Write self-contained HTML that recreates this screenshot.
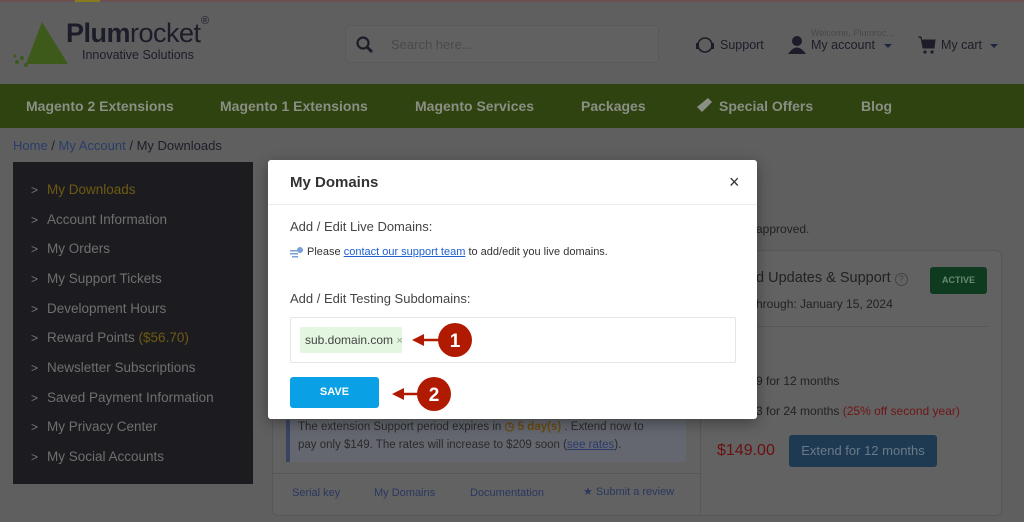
<!DOCTYPE html>
<html><head><style>
*{box-sizing:border-box;margin:0;padding:0}
body{width:1024px;height:522px;overflow:hidden;background:#5f5f5f;font-family:"Liberation Sans",sans-serif;position:relative;color:#222}
.abs{position:absolute}
.nav span{position:absolute;top:98px;color:#8a8f84;font-size:14px;font-weight:bold}
.side div{position:absolute;left:18px;font-size:13.5px;color:#6f6f6f;white-space:nowrap}
.side div b{font-weight:normal;color:#777;display:inline-block;width:16px;font-size:12px}
</style></head><body>
<div class="abs" style="left:0;top:0;width:1024px;height:2px;background:#6a5050"></div>
<div class="abs" style="left:75px;top:0;width:25px;height:2px;background:#8a7a20"></div>
<!-- logo -->
<svg class="abs" style="left:12px;top:20px" width="60" height="48">
<g fill="#3d5a1a"><polygon points="30,2 56,44 14,44"/></g>
<g fill="#3d5a1a"><circle cx="5" cy="42" r="2"/><circle cx="10" cy="38" r="2"/><circle cx="3" cy="36" r="1.5"/><circle cx="14" cy="45" r="2"/></g>
</svg>
<div class="abs" style="left:66px;top:18px;font-size:27px;font-weight:bold;color:#1d1d2a;letter-spacing:-0.5px">Plum<span style="font-weight:normal">rocket</span></div>
<div class="abs" style="left:201px;top:15px;font-size:11px;color:#1d1d2a">®</div>
<div class="abs" style="left:82px;top:48px;font-size:12.5px;color:#1d1d2a">Innovative Solutions</div>
<!-- search -->
<div class="abs" style="left:345px;top:25px;width:314px;height:38px;border:1px solid #595959;border-radius:4px;background:#616161"></div>
<svg class="abs" style="left:355px;top:35px" width="20" height="20"><circle cx="8" cy="8" r="5.5" fill="none" stroke="#1d1d2a" stroke-width="2.2"/><line x1="12" y1="12" x2="17" y2="17" stroke="#1d1d2a" stroke-width="3"/></svg>
<div class="abs" style="left:391px;top:37px;font-size:13px;color:#4a4a4a">Search here...</div>
<svg class="abs" style="left:694px;top:35px" width="22" height="22"><circle cx="11" cy="10" r="7" fill="none" stroke="#1d1d2a" stroke-width="1.6"/><rect x="2" y="8" width="3" height="6" fill="#1d1d2a"/><rect x="17" y="8" width="3" height="6" fill="#1d1d2a"/></svg>
<div class="abs" style="left:720px;top:38px;font-size:12.5px;color:#1d1d2a">Support</div>
<svg class="abs" style="left:787px;top:35px" width="20" height="20"><circle cx="10" cy="6" r="5" fill="#1d1d2a"/><path d="M1 19 Q10 6 19 19Z" fill="#1d1d2a"/></svg>
<div class="abs" style="left:811px;top:28px;font-size:9px;color:#4a4a4a">Welcome, Plumroc...</div>
<div class="abs" style="left:811px;top:38px;font-size:12.5px;color:#1d1d2a">My account</div>
<div class="abs" style="left:884px;top:44px;border:4px solid transparent;border-top-color:#1d2540"></div>
<svg class="abs" style="left:917px;top:35px" width="20" height="20"><path d="M1 2h3l2 11h11l1-8H6" fill="#1d1d2a" stroke="#1d1d2a"/><circle cx="8" cy="17" r="1.6" fill="#1d1d2a"/><circle cx="15" cy="17" r="1.6" fill="#1d1d2a"/></svg>
<div class="abs" style="left:941px;top:38px;font-size:12.5px;color:#1d1d2a">My cart</div>
<div class="abs" style="left:990px;top:44px;border:4px solid transparent;border-top-color:#1d2540"></div>
<!-- nav -->
<div class="abs" style="left:0;top:84px;width:1024px;height:44px;background:#2f4311"></div>
<div class="nav"><span style="left:26px">Magento 2 Extensions</span><span style="left:220px">Magento 1 Extensions</span><span style="left:415px">Magento Services</span><span style="left:581px">Packages</span><span style="left:719px">Special Offers</span><span style="left:861px">Blog</span></div>
<svg class="abs" style="left:695px;top:96px" width="20" height="20"><path d="M13 2l4 4-10 10-5-5z" fill="#8a8f84"/></svg>
<div class="abs" style="left:13px;top:138px;font-size:13px;color:#1d1d2a"><span style="color:#2a3c6a">Home</span> / <span style="color:#2a3c6a">My Account</span> / My Downloads</div>
<!-- sidebar -->
<div class="abs side" style="left:13px;top:162px;width:240px;height:322px;background:#1c1c20">
<div style="top:20px;color:#6e5a12"><b>&gt;</b>My Downloads</div>
<div style="top:50px"><b>&gt;</b>Account Information</div>
<div style="top:79px"><b>&gt;</b>My Orders</div>
<div style="top:109px"><b>&gt;</b>My Support Tickets</div>
<div style="top:139px"><b>&gt;</b>Development Hours</div>
<div style="top:168px"><b>&gt;</b>Reward Points <span style="color:#6e5a12">($56.70)</span></div>
<div style="top:198px"><b>&gt;</b>Newsletter Subscriptions</div>
<div style="top:228px"><b>&gt;</b>Saved Payment Information</div>
<div style="top:257px"><b>&gt;</b>My Privacy Center</div>
<div style="top:287px"><b>&gt;</b>My Social Accounts</div>
</div>
<!-- background card -->
<div class="abs" style="left:756px;top:222px;font-size:12px;color:#222">approved.</div>
<div class="abs" style="left:272px;top:250px;width:730px;height:266px;border:1px solid #575757;border-radius:6px;background:#626262"></div>
<div class="abs" style="left:700px;top:250px;width:1px;height:266px;background:#575757"></div>
<div class="abs" style="left:756px;top:270px;font-size:14.5px;color:#222">d Updates &amp; Support <span style="display:inline-block;width:13px;height:13px;border:1px solid #444;border-radius:50%;font-size:9px;text-align:center;line-height:11px;color:#444">?</span></div>
<div class="abs" style="left:930px;top:267px;width:57px;height:27px;background:#0e3a1f;border-radius:3px;color:#6a8a74;font-size:9px;font-weight:bold;text-align:center;line-height:27px">ACTIVE</div>
<div class="abs" style="left:756px;top:297px;font-size:12px;color:#222">hrough: January 15, 2024</div>
<div class="abs" style="left:720px;top:326px;width:268px;height:1px;background:#575757"></div>
<div class="abs" style="left:756px;top:374px;font-size:12px;color:#222">9 for 12 months</div>
<div class="abs" style="left:756px;top:404px;font-size:12px;color:#222">3 for 24 months <span style="color:#701515">(25% off second year)</span></div>
<div class="abs" style="left:717px;top:442px;font-size:16px;color:#6a1010">$149.00</div>
<div class="abs" style="left:789px;top:435px;width:148px;height:32px;background:#1d3a52;border-radius:3px;color:#6a7a88;font-size:13px;text-align:center;line-height:32px">Extend for 12 months</div>
<div class="abs" style="left:286px;top:420px;width:400px;height:42px;background:#646770;border-left:4px solid #394560"></div>
<div class="abs" style="left:298px;top:418px;font-size:11.5px;color:#2a2a2a;line-height:18px">The extension Support period expires in <span style="color:#6a4a10;font-weight:bold">◷ 5 day(s)</span> . Extend now to<br>pay only $149. The rates will increase to $209 soon (<u style="color:#2a3c6a">see rates</u>).</div>
<div class="abs" style="left:273px;top:473px;width:427px;height:1px;background:#575757"></div>
<div class="abs" style="left:292px;top:487px;font-size:11px;color:#2a3760">Serial key</div>
<div class="abs" style="left:374px;top:487px;font-size:11px;color:#2a3760">My Domains</div>
<div class="abs" style="left:470px;top:487px;font-size:11px;color:#2a3760">Documentation</div>
<div class="abs" style="left:583px;top:485px;font-size:11px;color:#2a3760">★ Submit a review</div>
<!-- modal -->
<div class="abs" style="left:268px;top:160px;width:489px;height:259px;background:#fff;border-radius:3px;box-shadow:0 4px 14px rgba(0,0,0,.35)"></div>
<div class="abs" style="left:290px;top:174px;font-size:15px;color:#333;font-weight:bold">My Domains</div>
<div class="abs" style="left:729px;top:172px;font-size:18px;color:#333">×</div>
<div class="abs" style="left:268px;top:204px;width:489px;height:1px;background:#e6ecf2"></div>
<div class="abs" style="left:290px;top:219px;font-size:13px;color:#444">Add / Edit Live Domains:</div>
<svg class="abs" style="left:290px;top:246px" width="14" height="12"><rect x="0" y="4" width="8" height="1.5" fill="#7aa0d8"/><rect x="0" y="7" width="8" height="1.5" fill="#7aa0d8"/><rect x="2" y="10" width="6" height="1.5" fill="#7aa0d8"/><circle cx="10" cy="4" r="3" fill="#7aa0d8"/></svg>
<div class="abs" style="left:307px;top:246px;font-size:11px;color:#333">Please <u style="color:#2060d0">contact our support team</u> to add/edit you live domains.</div>
<div class="abs" style="left:290px;top:291px;font-size:13px;color:#444">Add / Edit Testing Subdomains:</div>
<div class="abs" style="left:290px;top:317px;width:446px;height:46px;border:1px solid #e3e6e9;border-radius:2px"></div>
<div class="abs" style="left:300px;top:327px;width:102px;height:26px;background:#e3f6df;border-radius:2px;font-size:12px;color:#444;line-height:26px;padding-left:5px;white-space:nowrap">sub.domain.com <span style="color:#8a9a8a;font-size:11px">×</span></div>
<div class="abs" style="left:290px;top:377px;width:89px;height:31px;background:#0aa0e6;border-radius:3px;color:#fff;font-size:11px;font-weight:bold;text-align:center;line-height:31px">SAVE</div>
<!-- arrows -->
<svg class="abs" style="left:408px;top:320px" width="70" height="40"><line x1="14" y1="20" x2="40" y2="20" stroke="#b01a00" stroke-width="2.5"/><polygon points="4,20 16,14 16,26" fill="#b01a00"/><circle cx="47" cy="20" r="17" fill="#b01a00"/><text x="47" y="27" text-anchor="middle" font-family="Liberation Sans" font-weight="bold" font-size="19" fill="#fff">1</text></svg>
<svg class="abs" style="left:388px;top:374px" width="70" height="40"><line x1="14" y1="20" x2="30" y2="20" stroke="#b01a00" stroke-width="2.5"/><polygon points="4,20 16,14 16,26" fill="#b01a00"/><circle cx="46" cy="20" r="17" fill="#b01a00"/><text x="46" y="27" text-anchor="middle" font-family="Liberation Sans" font-weight="bold" font-size="19" fill="#fff">2</text></svg>
</body></html>
